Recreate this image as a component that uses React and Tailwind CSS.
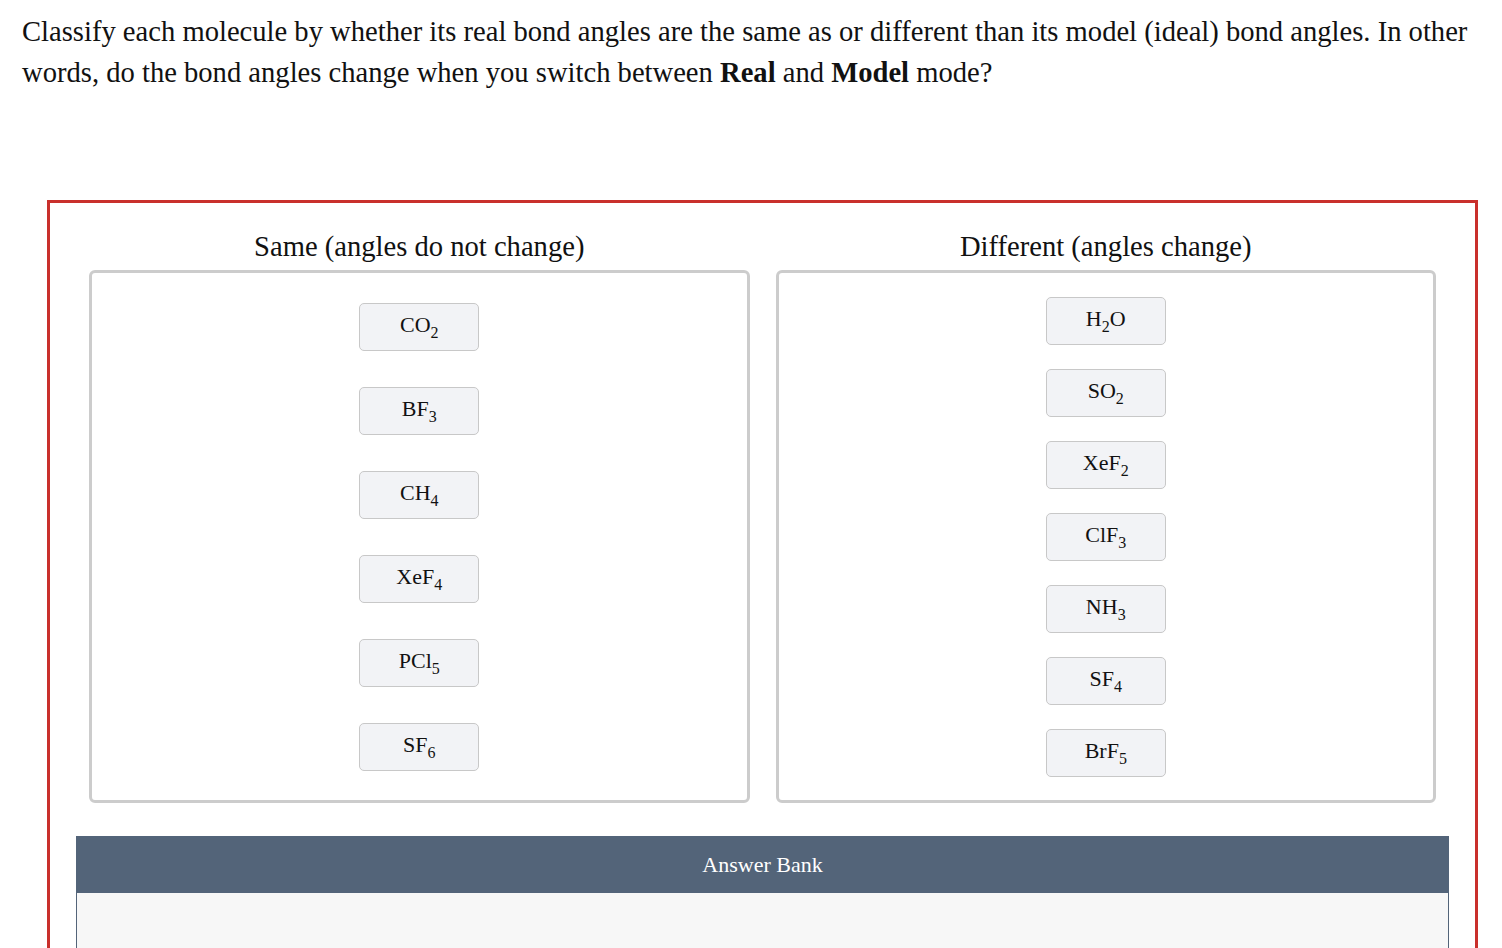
import React from 'react';

const same = [
  ['CO', '2', ''],
  ['BF', '3', ''],
  ['CH', '4', ''],
  ['XeF', '4', ''],
  ['PCl', '5', ''],
  ['SF', '6', ''],
];

const different = [
  ['H', '2', 'O'],
  ['SO', '2', ''],
  ['XeF', '2', ''],
  ['ClF', '3', ''],
  ['NH', '3', ''],
  ['SF', '4', ''],
  ['BrF', '5', ''],
];

function Chip({ parts }) {
  const [a, sub, b] = parts;
  return (
    <div className="w-[120px] h-[48px] shrink-0 bg-[#f2f3f6] border border-[#c8c8c8] rounded-[5px] flex items-center justify-center text-[22px] leading-none text-[#111]">
      <span className="-mt-[4px]">
        {a}
        <sub className="text-[16px] align-baseline relative bottom-[-6px]">{sub}</sub>
        {b}
      </span>
    </div>
  );
}

function Zone({ title, items, gap }) {
  return (
    <div className="flex flex-col">
      <h2 className="text-[28.6px] text-[#111] text-center h-[40px] leading-[34px] mt-[27px]">{title}</h2>
      <div className={`h-[533px] border-[3px] border-[#cccccc] rounded-[6px] flex flex-col items-center justify-center ${gap}`}>
        {items.map((p, i) => (
          <Chip key={i} parts={p} />
        ))}
      </div>
    </div>
  );
}

export default function App() {
  return (
    <div className="min-h-screen bg-white font-['Liberation_Serif','Times_New_Roman',serif] text-[#111] overflow-hidden">
      <p className="pl-[22px] pr-[20px] pt-[11px] text-[28.6px] leading-[41px]">
        Classify each molecule by whether its real bond angles are the same as or different than its model (ideal) bond angles. In other
        words, do the bond angles change when you switch between <b>Real</b> and <b>Model</b> mode?
      </p>

      <div className="ml-[47px] mr-[24px] mt-[107px] border-[3px] border-b-0 border-[#c9302c] px-[26px] pb-0">
        <div className="grid grid-cols-2 gap-[26px] px-[13px]">
          <Zone title="Same (angles do not change)" items={same} gap="gap-[36px]" />
          <Zone title="Different (angles change)" items={different} gap="gap-[24px]" />
        </div>

        <div className="mt-[33px]">
          <div className="h-[57px] bg-[#536479] flex items-center justify-center text-white text-[22px]">
            Answer Bank
          </div>
          <div className="h-[120px] bg-[#f7f7f7] border-x border-[#536479]"></div>
        </div>
      </div>
    </div>
  );
}
